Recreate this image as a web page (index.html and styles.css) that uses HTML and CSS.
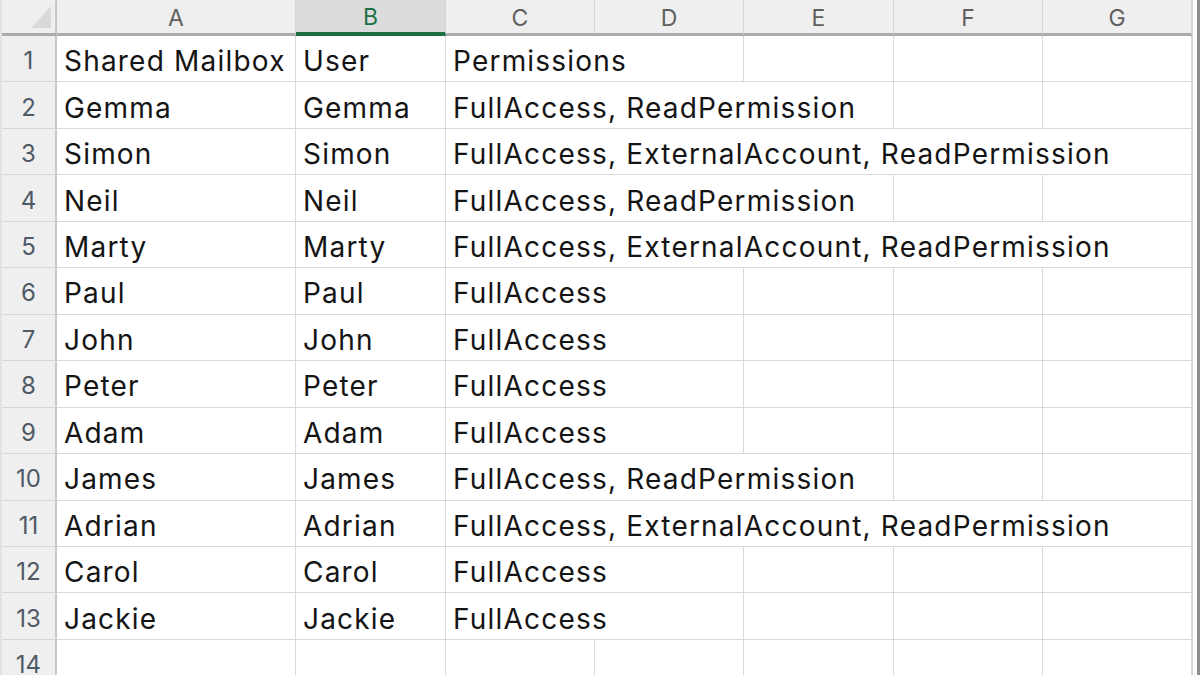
FILE: index.html
```html
<!DOCTYPE html>
<html>
<head>
<meta charset="utf-8">
<link rel="stylesheet" href="styles.css">
</head>
<body>
<div class="sheet">
  <div class="grid">
    <div class="corner"><span class="tri"></span></div>
    <div class="ch">A</div>
    <div class="ch sel">B</div>
    <div class="ch">C</div>
    <div class="ch">D</div>
    <div class="ch">E</div>
    <div class="ch">F</div>
    <div class="ch">G</div>

    <div class="rh">1</div><div class="c">Shared Mailbox</div><div class="c">User</div><div class="c s2">Permissions</div><div class="c"></div><div class="c"></div><div class="c"></div>
    <div class="rh">2</div><div class="c">Gemma</div><div class="c">Gemma</div><div class="c s3">FullAccess, ReadPermission</div><div class="c"></div><div class="c"></div>
    <div class="rh">3</div><div class="c">Simon</div><div class="c">Simon</div><div class="c s5">FullAccess, ExternalAccount, ReadPermission</div>
    <div class="rh">4</div><div class="c">Neil</div><div class="c">Neil</div><div class="c s3">FullAccess, ReadPermission</div><div class="c"></div><div class="c"></div>
    <div class="rh">5</div><div class="c">Marty</div><div class="c">Marty</div><div class="c s5">FullAccess, ExternalAccount, ReadPermission</div>
    <div class="rh">6</div><div class="c">Paul</div><div class="c">Paul</div><div class="c s2">FullAccess</div><div class="c"></div><div class="c"></div><div class="c"></div>
    <div class="rh">7</div><div class="c">John</div><div class="c">John</div><div class="c s2">FullAccess</div><div class="c"></div><div class="c"></div><div class="c"></div>
    <div class="rh">8</div><div class="c">Peter</div><div class="c">Peter</div><div class="c s2">FullAccess</div><div class="c"></div><div class="c"></div><div class="c"></div>
    <div class="rh">9</div><div class="c">Adam</div><div class="c">Adam</div><div class="c s2">FullAccess</div><div class="c"></div><div class="c"></div><div class="c"></div>
    <div class="rh">10</div><div class="c">James</div><div class="c">James</div><div class="c s3">FullAccess, ReadPermission</div><div class="c"></div><div class="c"></div>
    <div class="rh">11</div><div class="c">Adrian</div><div class="c">Adrian</div><div class="c s5">FullAccess, ExternalAccount, ReadPermission</div>
    <div class="rh">12</div><div class="c">Carol</div><div class="c">Carol</div><div class="c s2">FullAccess</div><div class="c"></div><div class="c"></div><div class="c"></div>
    <div class="rh">13</div><div class="c">Jackie</div><div class="c">Jackie</div><div class="c s2">FullAccess</div><div class="c"></div><div class="c"></div><div class="c"></div>
    <div class="rh">14</div><div class="c"></div><div class="c"></div><div class="c"></div><div class="c"></div><div class="c"></div><div class="c"></div><div class="c"></div>
  </div>
  <div class="edge"></div>
</div>
</body>
</html>
```
FILE: styles.css
```css
* { box-sizing: border-box; margin: 0; padding: 0; }
html, body { width: 1200px; height: 675px; overflow: hidden; background: #fff; }
body { font-family: "Inter", "Open Sans", sans-serif; }

.sheet {
  display: flex;
  width: 1200px;
  height: 675px;
  border-right: 3px solid #8e8e8e;
}
.grid {
  display: grid;
  grid-template-columns: 55px 239px 150px 149px 149px 150px 149px 149px;
  grid-template-rows: 36px;
  grid-auto-rows: 46.46px;
  flex: 0 0 auto;
  border-left: 2px solid #e2e2e2;
}
.edge { flex: 1; border-left: 1px solid #d6d6d6; }

.corner {
  position: relative;
  background: #efefef;
  border-bottom: 3px solid #ababab;
  border-right: 2px solid #c8c8c8;
}
.tri {
  position: absolute;
  right: 4px;
  bottom: 5px;
  width: 0; height: 0;
  border-style: solid;
  border-width: 0 0 22px 20px;
  border-color: transparent transparent #d9d9d9 transparent;
}
.ch {
  background: #efefef;
  border-bottom: 3px solid #ababab;
  border-right: 1px solid #d4d4d4;
  color: #5f5f5f;
  font-size: 23px;
  display: flex;
  align-items: center;
  justify-content: center;
  padding-top: 2px;
}
.ch.sel {
  background: #dcdcdc;
  color: #1e7145;
  border-bottom: 4px solid #1e6e42;
}
.rh {
  background: #efefef;
  border-right: 2px solid #c8c8c8;
  border-bottom: 1px solid #d6d6d6;
  color: #4f5a66;
  font-size: 24px;
  display: flex;
  align-items: center;
  justify-content: center;
  padding-top: 4px;
}
.c {
  border-right: 1px solid #d9d9d9;
  border-bottom: 1px solid #d9d9d9;
  color: #141414;
  font-size: 28px;
  letter-spacing: 1.2px;
  display: flex;
  align-items: center;
  padding: 5px 0 0 7px;
  white-space: nowrap;
  overflow: visible;
}
.s2 { grid-column: span 2; }
.s3 { grid-column: span 3; }
.s5 { grid-column: span 5; }
```
